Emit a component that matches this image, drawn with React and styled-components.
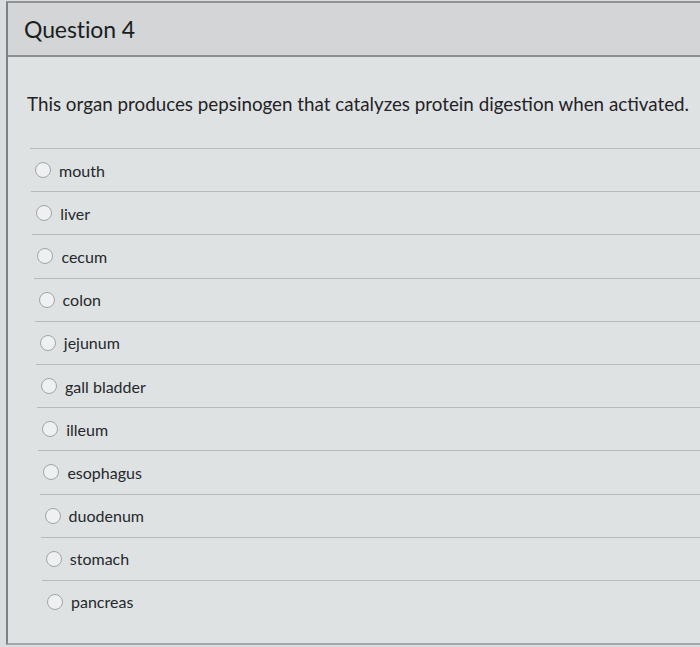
import React from "react";
import styled, { createGlobalStyle } from "styled-components";

const Global = createGlobalStyle`
  html, body { margin: 0; padding: 0; }
  body {
    background: #dadddf;
    font-family: Lato, "Open Sans", "Liberation Sans", sans-serif;
    width: 700px;
    height: 647px;
    overflow: hidden;
  }
`;

const Page = styled.div`
  padding-top: 1px;
  padding-left: 6px;
`;

const Panel = styled.section`
  border-top: 2px solid #8f9294;
  border-left: 2px solid #7f8284;
  border-bottom: 2px solid #a3a6a8;
  background: #dfe2e3;
`;

const Header = styled.header`
  height: 52px;
  display: flex;
  align-items: center;
  padding-left: 16px;
  background: #d3d5d7;
  border-bottom: 2px solid #8c8f91;
`;

const Title = styled.h2`
  margin: 0;
  font-size: 23px;
  font-weight: 400;
  color: #1a1e21;
  letter-spacing: -0.1px;
`;

const Body = styled.div`
  padding: 34px 0 20px 19px;
`;

const Prompt = styled.p`
  margin: 0 0 32px;
  font-size: 18.8px;
  line-height: 25px;
  color: #1f2326;
  white-space: nowrap;
`;

const Answers = styled.div`
  display: flex;
  flex-direction: column;
`;

const Row = styled.label`
  display: flex;
  align-items: center;
  gap: 8px;
  height: 42.2px;
  border-top: 1px solid #b7babc;
  margin-left: ${(p) => 3 + p.$i * 1.2}px;
  padding-left: 5px;
  font-size: 16px;
  color: #24282b;
`;

const Radio = styled.span`
  width: 16px;
  height: 16px;
  box-sizing: border-box;
  border-radius: 50%;
  border: 1.5px solid #a2a5a7;
  background: #eef0f1;
  flex: none;
`;

const options = [
  "mouth",
  "liver",
  "cecum",
  "colon",
  "jejunum",
  "gall bladder",
  "illeum",
  "esophagus",
  "duodenum",
  "stomach",
  "pancreas",
];

export default function App() {
  return (
    <Page>
      <Global />
      <Panel>
        <Header>
          <Title>Question 4</Title>
        </Header>
        <Body>
          <Prompt>
            This organ produces pepsinogen that catalyzes protein digestion when activated.
          </Prompt>
          <Answers>
            {options.map((o, i) => (
              <Row key={o} $i={i}>
                <Radio />
                {o}
              </Row>
            ))}
          </Answers>
        </Body>
      </Panel>
    </Page>
  );
}
